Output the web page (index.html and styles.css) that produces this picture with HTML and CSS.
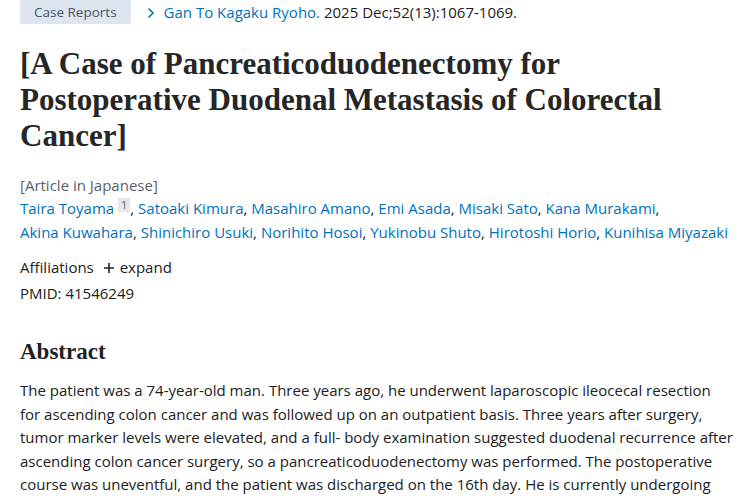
FILE: index.html
```html
<!DOCTYPE html>
<html lang="en">
<head>
<meta charset="utf-8">
<title>Case Report</title>
<link rel="stylesheet" href="styles.css">
</head>
<body>
<main class="article">
  <div class="meta">
    <span class="badge">Case Reports</span>
    <span class="cite"><svg class="chev" width="8" height="12" viewBox="0 0 8 12"><path d="M1.5 1.5 L6 6 L1.5 10.5" fill="none" stroke="#0071bc" stroke-width="1.6"/></svg><a class="link" href="#">Gan To Kagaku Ryoho.</a> 2025 Dec;52(13):1067-1069.</span>
  </div>
  <h1 class="title">[A Case of Pancreaticoduodenectomy for Postoperative Duodenal Metastasis of Colorectal Cancer]</h1>
  <div class="lang">[Article in Japanese]</div>
  <div class="authors">
    <span class="author"><a class="link" href="#">Taira Toyama</a> <sup class="aff">1</sup>,</span>
    <span class="author"><a class="link" href="#">Satoaki Kimura</a>,</span>
    <span class="author"><a class="link" href="#">Masahiro Amano</a>,</span>
    <span class="author"><a class="link" href="#">Emi Asada</a>,</span>
    <span class="author"><a class="link" href="#">Misaki Sato</a>,</span>
    <span class="author"><a class="link" href="#">Kana Murakami</a>,</span>
    <span class="author"><a class="link" href="#">Akina Kuwahara</a>,</span>
    <span class="author"><a class="link" href="#">Shinichiro Usuki</a>,</span>
    <span class="author"><a class="link" href="#">Norihito Hosoi</a>,</span>
    <span class="author"><a class="link" href="#">Yukinobu Shuto</a>,</span>
    <span class="author"><a class="link" href="#">Hirotoshi Horio</a>,</span>
    <span class="author"><a class="link" href="#">Kunihisa Miyazaki</a></span>
  </div>
  <div class="affil">Affiliations <span class="expand"><svg class="plus" width="12" height="12" viewBox="0 0 12 12"><path d="M6 1 V11 M1 6 H11" stroke="#212121" stroke-width="1.6"/></svg>expand</span></div>
  <div class="pmid">PMID: 41546249</div>
  <h2 class="abs-head">Abstract</h2>
  <p class="abstract">The patient was a 74-year-old man. Three years ago, he underwent laparoscopic ileocecal resection for ascending colon cancer and was followed up on an outpatient basis. Three years after surgery, tumor marker levels were elevated, and a full- body examination suggested duodenal recurrence after ascending colon cancer surgery, so a pancreaticoduodenectomy was performed. The postoperative course was uneventful, and the patient was discharged on the 16th day. He is currently undergoing chemotherapy as an outpatient.</p>
</main>
</body>
</html>
```
FILE: styles.css
```css
html, body {
  margin: 0;
  padding: 0;
  background: #fff;
}
body {
  font-family: "Open Sans", "Liberation Sans", sans-serif;
  color: #212121;
  overflow: hidden;
  height: 500px;
}
.article {
  padding: 0 20px;
  width: 714px;
}
.meta {
  display: flex;
  align-items: center;
  gap: 16px;
  font-size: 15px;
  line-height: 24px;
}
.badge {
  background: #dfe5ee;
  color: #44536f;
  font-size: 13.5px;
  padding: 0 14px;
  line-height: 24px;
}
.chev {
  margin-right: 9px;
  vertical-align: -1px;
}
.link {
  color: #0071bc;
  text-decoration: none;
}
.cite {
  color: #212121;
}
.title {
  font-family: "Liberation Serif", "Times New Roman", serif;
  font-weight: bold;
  font-size: 31px;
  line-height: 36px;
  margin: 22px 0 0;
  color: #262626;
}
.lang {
  margin-top: 20px;
  font-size: 15px;
  line-height: 22px;
  color: #5b616b;
}
.authors {
  font-size: 15px;
  line-height: 24px;
}
.author {
  white-space: nowrap;
}
.aff {
  display: inline-block;
  font-size: 11px;
  line-height: 14px;
  background: #e6e6e6;
  color: #5b616b;
  padding: 0 3px;
  vertical-align: 5px;
}
.affil {
  margin-top: 11px;
  font-size: 15px;
  line-height: 24px;
}
.expand {
  margin-left: 5px;
}
.plus {
  margin-right: 5px;
  vertical-align: -1px;
}
.pmid {
  margin-top: 2px;
  font-size: 15px;
  line-height: 24px;
}
.abs-head {
  font-family: "Liberation Serif", "Times New Roman", serif;
  font-weight: bold;
  font-size: 23px;
  margin: 32px 0 0;
  line-height: 30px;
}
.abstract {
  margin: 12px 0 0;
  font-size: 15px;
  line-height: 23.5px;
}
```
